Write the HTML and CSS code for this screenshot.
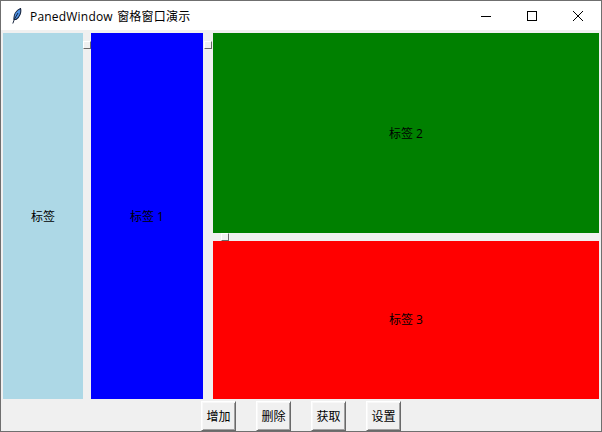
FILE: index.html
```html
<!DOCTYPE html>
<html lang="en">
<head>
    <meta charset="UTF-8">
    <title>PanedWindow 窗格窗口演示</title>
    <link rel="stylesheet" href="styles.css">
</head>
<body>
    <div class="window">
        <div class="titlebar">
            <svg class="app-icon" width="16" height="16" viewBox="0 0 16 16">
                <path d="M5 11.5 C4.5 7 7 2.5 11.5 0.5 C12.5 4 11 9 7 11.5 Z" fill="#4f93e6" stroke="#16233c" stroke-width="1.1"/>
                <path d="M3.8 15.5 L5.5 11 L9 5" stroke="#16233c" stroke-width="1" fill="none"/>
            </svg>
            <span class="title">PanedWindow 窗格窗口演示</span>
            <div class="controls">
                <svg class="control" width="46" height="30" viewBox="0 0 46 30"><path d="M18 15.5 H28" stroke="#000" fill="none"/></svg>
                <svg class="control" width="46" height="30" viewBox="0 0 46 30"><rect x="18.5" y="10.5" width="9" height="9" stroke="#000" fill="none"/></svg>
                <svg class="control" width="46" height="30" viewBox="0 0 46 30"><path d="M18 10 L28 20 M28 10 L18 20" stroke="#000" fill="none"/></svg>
            </div>
        </div>
        <div class="panes">
            <div class="pane pane-left">标签</div>
            <div class="sash-v"><span class="handle"></span></div>
            <div class="pane pane-blue">标签 1</div>
            <div class="sash-v sash-wide"><span class="handle"></span></div>
            <div class="right-col">
                <div class="pane pane-green">标签 2</div>
                <div class="sash-h"><span class="handle"></span></div>
                <div class="pane pane-red">标签 3</div>
            </div>
        </div>
        <div class="toolbar">
            <button class="btn">增加</button>
            <button class="btn">删除</button>
            <button class="btn">获取</button>
            <button class="btn">设置</button>
        </div>
    </div>
</body>
</html>
```

FILE: styles.css
```css
* {
    box-sizing: border-box;
}
body {
    margin: 0;
    background-color: #f0f0f0;
    font-family: "Open Sans", "Noto Sans CJK SC", sans-serif;
    font-size: 12px;
    color: #000000;
}
.window {
    display: flex;
    flex-direction: column;
    width: 602px;
    height: 432px;
    border: 1px solid #6f6f6f;
    overflow: hidden;
}
.titlebar {
    display: flex;
    align-items: center;
    height: 29px;
    flex-shrink: 0;
    padding-left: 8px;
    background-color: #ffffff;
}
.app-icon {
    margin-right: 5px;
}
.title {
    font-size: 12px;
    word-spacing: 1px;
    letter-spacing: 0.2px;
    color: #000000;
}
.controls {
    display: flex;
    margin-left: auto;
    margin-right: 0;
}
.control {
    display: block;
}
.panes {
    display: flex;
    height: 366px;
    margin: 3px 2px 0 2px;
}
.pane {
    display: flex;
    align-items: center;
    justify-content: center;
}
.pane-left {
    width: 80px;
    background-color: #add8e6;
}
.pane-blue {
    width: 112px;
    background-color: #0000ff;
}
.right-col {
    display: flex;
    flex-direction: column;
    flex: 1;
}
.pane-green {
    height: 200px;
    background-color: #008000;
}
.pane-red {
    flex: 1;
    padding-bottom: 2px;
    background-color: #ff0000;
}
.sash-v {
    position: relative;
    width: 8px;
}
.sash-wide {
    width: 10px;
}
.sash-h {
    position: relative;
    height: 8px;
}
.handle {
    position: absolute;
    width: 8px;
    height: 8px;
    background-color: #f0f0f0;
    border-top: 1px solid #ffffff;
    border-left: 1px solid #ffffff;
    border-right: 1px solid #696969;
    border-bottom: 1px solid #696969;
}
.sash-v .handle {
    top: 8px;
    left: 0;
}
.sash-wide .handle {
    left: 1px;
}
.sash-h .handle {
    top: 0;
    left: 8px;
}
.toolbar {
    display: flex;
    justify-content: center;
    gap: 20px;
    padding-top: 2px;
}
.btn {
    width: 35px;
    height: 30px;
    padding: 0;
    background-color: #f0f0f0;
    border-width: 1px;
    border-style: solid;
    border-color: #ffffff #696969 #696969 #ffffff;
    box-shadow: inset 1px 1px 0 #f8f8f8, inset -1px -1px 0 #a0a0a0;
    font-family: "Open Sans", "Noto Sans CJK SC", sans-serif;
    font-size: 12px;
    color: #000000;
}
```
